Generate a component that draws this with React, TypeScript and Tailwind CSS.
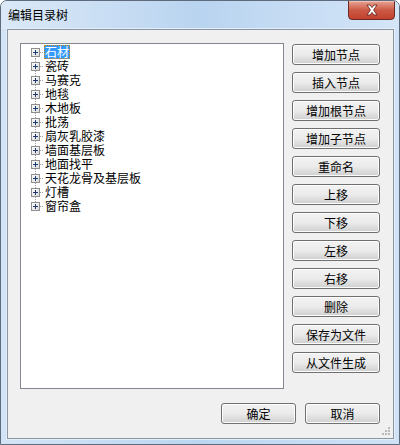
import React from "react";

const items = [
  "石材",
  "瓷砖",
  "马赛克",
  "地毯",
  "木地板",
  "批荡",
  "扇灰乳胶漆",
  "墙面基层板",
  "地面找平",
  "天花龙骨及基层板",
  "灯槽",
  "窗帘盒",
];

const sideButtons = [
  "增加节点",
  "插入节点",
  "增加根节点",
  "增加子节点",
  "重命名",
  "上移",
  "下移",
  "左移",
  "右移",
  "删除",
  "保存为文件",
  "从文件生成",
];

const font = { fontFamily: '"SimSun", "Noto Sans CJK SC", sans-serif' };

function WinButton({ label, className }: { label: string; className: string }) {
  return (
    <div
      className={`${className} h-[21px] rounded-[3px] border border-[#707070] bg-gradient-to-b from-[#f2f2f2] via-[#ebebeb] to-[#cfcfcf] flex items-center justify-center text-[12px] leading-none text-black shadow-[inset_0_0_0_1px_#fcfcfc]`}
    >
      {label}
    </div>
  );
}

function TreeRow({ label, index, total }: { label: string; index: number; total: number }) {
  const first = index === 0;
  const last = index === total - 1;
  return (
    <div className="h-[14px] flex items-center">
      <svg width="23" height="14" className="shrink-0">
        <line
          x1="14.5"
          x2="14.5"
          y1={first ? 7 : 0}
          y2={last ? 7 : 14}
          stroke="#a0a0a0"
          strokeWidth="1"
          strokeDasharray="1 1"
        />
        <line x1="19" x2="23" y1="7.5" y2="7.5" stroke="#a0a0a0" strokeWidth="1" strokeDasharray="1 1" />
        <rect x="10.5" y="3.5" width="8" height="8" fill="url(#boxg)" stroke="#8f8f8f" />
        <line x1="12" x2="17" y1="7.5" y2="7.5" stroke="#1f3a6e" strokeWidth="1" />
        <line x1="14.5" x2="14.5" y1="5" y2="10" stroke="#1f3a6e" strokeWidth="1" />
      </svg>
      {first ? (
        <span className="h-[14px] px-[1px] bg-[#3399ff] text-white text-[12px] leading-[14px] outline outline-1 outline-dotted outline-[#c9861a] -outline-offset-1">
          {label}
        </span>
      ) : (
        <span className="h-[14px] px-[1px] text-black text-[12px] leading-[14px]">{label}</span>
      )}
    </div>
  );
}

export default function App() {
  return (
    <div className="w-[400px] h-[445px] bg-white" style={font}>
      <svg width="0" height="0" className="absolute">
        <defs>
          <linearGradient id="boxg" x1="0" y1="0" x2="1" y2="1">
            <stop offset="0" stopColor="#ffffff" />
            <stop offset="1" stopColor="#d8d8d8" />
          </linearGradient>
        </defs>
      </svg>
      <div className="w-[400px] h-[445px] flex flex-col border border-[#5e6b7d] rounded-t-[7px] overflow-hidden bg-gradient-to-r from-[#d3e4f6] via-[#bcd6f1] to-[#cfe2f6]">
        {/* title bar */}
        <div className="h-[28px] shrink-0 flex items-start justify-between bg-gradient-to-r from-[#dbe9f7] via-[#b9d4f0] to-[#d4e5f7]">
          <div className="pl-[7px] pt-[8px] text-[12px] leading-[12px] text-black">编辑目录树</div>
          <div className="mr-[4px] -mt-[1px] w-[47px] h-[20px] rounded-b-[4px] border border-[#6d2a22] bg-gradient-to-b from-[#e6a494] via-[#cc5a46] to-[#c2402c] flex items-center justify-center shadow-[inset_0_1px_0_#f2c2b6]">
            <svg width="14" height="12" viewBox="0 0 14 12">
              <path
                d="M2 1 L5 1 L7 3.6 L9 1 L12 1 L8.6 6 L12 11 L9 11 L7 8.4 L5 11 L2 11 L5.4 6 Z"
                fill="#ffffff"
                stroke="#5a1d14"
                strokeWidth="0.8"
                strokeLinejoin="round"
              />
            </svg>
          </div>
        </div>
        {/* frame + client */}
        <div className="flex-1 pl-[6px] pr-[5px] pb-[5px] flex">
          <div className="flex-1 border border-[#8a96a6] bg-[#f0f0f0] flex flex-col shadow-[0_0_0_1px_#e4eef9]">
            <div className="flex pl-[12px] pt-[13px]">
              <div className="w-[264px] h-[346px] border border-[#828790] bg-white pt-[1px] shrink-0">
                {items.map((it, i) => (
                  <TreeRow key={it} label={it} index={i} total={items.length} />
                ))}
              </div>
              <div className="ml-[8px] mt-[1px] flex flex-col gap-[7px]">
                {sideButtons.map((b) => (
                  <WinButton key={b} label={b} className="w-[88px]" />
                ))}
              </div>
            </div>
            <div className="flex justify-end pr-[13px] mt-[14px] gap-[9px]">
              <WinButton label="确定" className="w-[75px]" />
              <WinButton label="取消" className="w-[75px]" />
            </div>
            <div className="flex-1 flex justify-end items-end pr-[2px] pb-[2px]">
              <svg width="10" height="10">
                {[
                  [7, 1],
                  [4, 4],
                  [7, 4],
                  [1, 7],
                  [4, 7],
                  [7, 7],
                ].map(([x, y], k) => (
                  <rect key={k} x={x} y={y} width="2" height="2" fill="#b8b8b8" />
                ))}
              </svg>
            </div>
          </div>
        </div>
      </div>
    </div>
  );
}
